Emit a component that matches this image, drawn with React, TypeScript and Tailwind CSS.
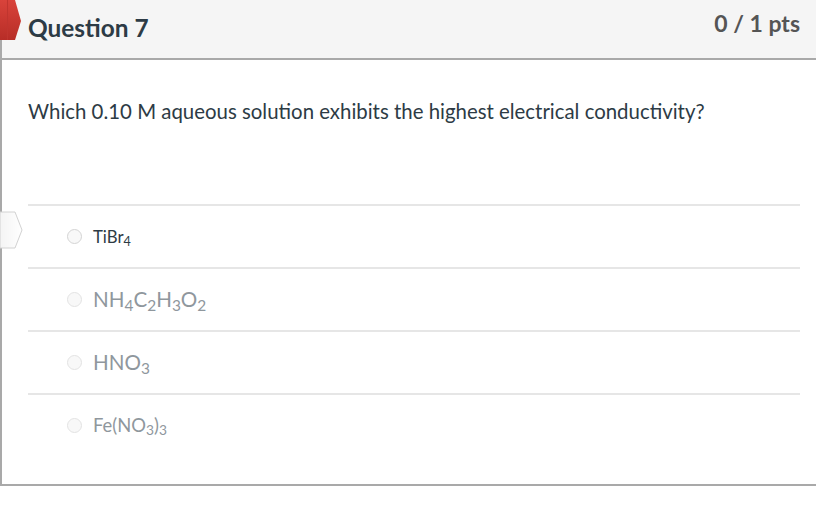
import React from 'react';

const answers = [
  { id: 'a', size: 'text-[16.8px]', tone: 'text-[#2d3b45]', ring: 'border-[#d4d4d4]', label: <>TiBr<sub>4</sub></> },
  { id: 'b', size: 'text-[20.6px]', tone: 'text-[#8f979d]', ring: 'border-[#e3e3e3]', label: <>NH<sub>4</sub>C<sub>2</sub>H<sub>3</sub>O<sub>2</sub></> },
  { id: 'c', size: 'text-[20.6px]', tone: 'text-[#8f979d]', ring: 'border-[#e3e3e3]', label: <>HNO<sub>3</sub></> },
  { id: 'd', size: 'text-[18.4px]', tone: 'text-[#8f979d]', ring: 'border-[#e3e3e3]', label: <>Fe(NO<sub>3</sub>)<sub>3</sub></> },
];

const App = () => {
  return (
    <div className="relative w-[816px] h-[512px] overflow-hidden bg-white font-['Lato',sans-serif]">
      <div className="border-l-2 border-b-2 border-[#a9a9a9] h-[486px] flex flex-col">
        <div className="h-[60px] bg-[#f5f5f5] border-b-2 border-[#a9a9a9] flex items-center justify-between pl-[26px] pr-[16px] shrink-0">
          <h2 className="text-[24.4px] font-bold text-[#2d3b45] leading-none mb-[2px]">Question 7</h2>
          <span className="text-[23px] font-bold text-[#555] leading-none mb-[12px]">0 / 1 pts</span>
        </div>

        <div className="pt-[36px] pl-[26px] pr-[16px]">
          <p className="text-[20.4px] leading-[30px] text-[#2d3b45]">
            Which 0.10 M aqueous solution exhibits the highest electrical conductivity?
          </p>

          <div className="mt-[78px]">
            {answers.map((a) => (
              <div key={a.id} className="h-[63px] border-t-2 border-[#e6e6e6] flex items-center pl-[39px]">
                <span className={`w-[15px] h-[15px] rounded-full border ${a.ring} bg-[#f8f8f8] shrink-0`} />
                <span className={`ml-[11px] ${a.size} ${a.tone}`}>{a.label}</span>
              </div>
            ))}
          </div>
        </div>
      </div>

      {/* red flag */}
      <svg className="absolute left-0 top-0" width="24" height="42" viewBox="0 0 24 42">
        <defs>
          <linearGradient id="flag" x1="0" y1="0" x2="0" y2="1">
            <stop offset="0" stopColor="#d9433b" />
            <stop offset="1" stopColor="#b72d27" />
          </linearGradient>
        </defs>
        <polygon points="0,0 15,0 21,21 15,40 0,40" fill="url(#flag)" />
        <line x1="7.5" y1="0" x2="7.5" y2="40" stroke="#c0352f" strokeWidth="1" />
      </svg>

      {/* answer pointer */}
      <svg className="absolute left-0 top-[211px]" width="24" height="38" viewBox="0 0 24 38">
        <defs>
          <linearGradient id="ptr" x1="0" y1="0" x2="1" y2="0">
            <stop offset="0" stopColor="#f4f4f4" />
            <stop offset="1" stopColor="#ffffff" />
          </linearGradient>
        </defs>
        <polygon points="0,1 15,1 22,19 15,37 0,37" fill="url(#ptr)" stroke="#d2d2d2" strokeWidth="1" />
      </svg>
    </div>
  );
};

export default App;
